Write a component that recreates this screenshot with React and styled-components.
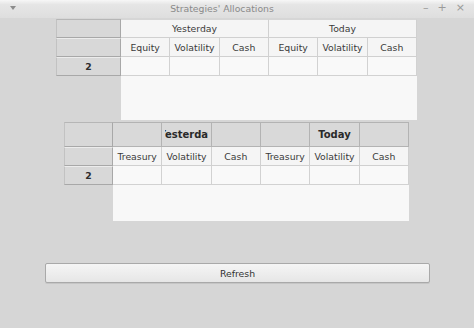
import React from "react";
import styled, { createGlobalStyle } from "styled-components";

const Global = createGlobalStyle`
  html, body { margin: 0; padding: 0; background: #d6d6d6; }
  body { font-family: "DejaVu Sans", "Liberation Sans", sans-serif; }
`;

const Window = styled.div`
  width: 474px;
  height: 328px;
  background: #d6d6d6;
  display: flex;
  flex-direction: column;
  overflow: hidden;
  font-family: "DejaVu Sans", "Liberation Sans", sans-serif;
  font-size: 9.3px;
  color: #333;
`;

const TitleBar = styled.div`
  height: 18px;
  flex: none;
  display: grid;
  grid-template-columns: 40px 1fr 60px;
  align-items: center;
  background: linear-gradient(#f7f7f7 0%, #e6e6e6 25%, #dedede 100%);
`;

const MenuArrow = styled.div`
  justify-self: start;
  margin-left: 10px;
  margin-top: -3px;
  width: 0;
  height: 0;
  border-left: 3px solid transparent;
  border-right: 3px solid transparent;
  border-top: 4px solid #8c8c8c;
`;

const Title = styled.div`
  text-align: center;
  color: #8a8a8a;
  font-size: 9.3px;
  margin-top: -1px;
  margin-left: -10px;
`;

const WinButtons = styled.div`
  display: flex;
  gap: 9px;
  justify-content: flex-end;
  padding-right: 9px;
  color: #9a9a9a;
  font-size: 11px;
  margin-top: -3px;
`;

const Content = styled.div`
  display: flex;
  flex-direction: column;
  flex: 1;
`;

const TableWidget = styled.div`
  display: flex;
  flex-direction: column;
  margin-left: ${(p) => p.$left}px;
  margin-top: ${(p) => p.$top}px;
  width: ${(p) => p.$width}px;
`;

const Grid = styled.div`
  display: grid;
  grid-template-columns: ${(p) => p.$corner}px repeat(6, 1fr);
  grid-template-rows: ${(p) => p.$rows};
`;

const HeadCell = styled.div`
  grid-column: span ${(p) => p.$span || 1};
  display: flex;
  align-items: center;
  padding: 0 3px;
  min-width: 0;
  background: ${(p) => (p.$gray ? "#d9d9d9" : "#f5f5f5")};
  border-right: 1px solid ${(p) => (p.$gray ? "#b3b3b3" : "#d0d0d0")};
  border-bottom: 1px solid ${(p) => (p.$gray ? "#b3b3b3" : "#d0d0d0")};
  border-top: ${(p) => (p.$first ? `1px solid ${p.$gray ? "#b3b3b3" : "#d6d6d6"}` : "none")};
  box-sizing: border-box;
  font-weight: ${(p) => (p.$bold ? "bold" : "normal")};
  font-size: ${(p) => (p.$bold ? "10px" : "9.3px")};
  color: ${(p) => (p.$bold ? "#2a2a2a" : "#3a3a3a")};
`;

const Label = styled.div`
  flex: 1;
  min-width: 0;
  display: flex;
  justify-content: center;
  overflow: hidden;
  white-space: nowrap;
  span { flex: none; }
`;

const SideCell = styled.div`
  display: flex;
  align-items: center;
  justify-content: center;
  background: #d8d8d8;
  border-left: 1px solid #c2c2c2;
  border-top: ${(p) => (p.$first ? "1px solid #b6b6b6" : "1px solid #ececec")};
  border-right: 1px solid #a8a8a8;
  border-bottom: 1px solid #a8a8a8;
  box-sizing: border-box;
  font-weight: bold;
  color: #2e2e2e;
`;

const DataCell = styled.div`
  background: #f9f9f9;
  border-right: 1px solid #d2d2d2;
  border-bottom: 1px solid #d2d2d2;
  box-sizing: border-box;
`;

const Filler = styled.div`
  display: grid;
  grid-template-columns: ${(p) => p.$corner}px 1fr;
  height: ${(p) => p.$height}px;
`;

const Gutter = styled.div`
  background: #d6d6d6;
`;

const Viewport = styled.div`
  background: #f8f8f8;
`;

const Spacer = styled.div`
  height: ${(p) => p.$h}px;
  flex: none;
`;

const RefreshButton = styled.button`
  margin-left: 45px;
  width: 385px;
  height: 20px;
  padding: 0;
  border: 1px solid #a9a9a9;
  border-radius: 2px;
  background: linear-gradient(#f5f5f5, #e6e6e6);
  box-shadow: 0 1px 0 rgba(0, 0, 0, 0.08);
  font-family: "DejaVu Sans", "Liberation Sans", sans-serif;
  font-size: 9.3px;
  color: #333;
  box-sizing: border-box;
`;

function AllocTable({ left, top, width, corner, rows, groupCells, columns, fillerHeight }) {
  return (
    <TableWidget $left={left} $top={top} $width={width}>
      <Grid $corner={corner} $rows={rows}>
        <SideCell $first />
        {groupCells.map((c, i) => (
          <HeadCell key={"g" + i} $first $span={c.span} $gray={c.gray} $bold={c.bold}>
            <Label>
              <span>{c.text}</span>
            </Label>
          </HeadCell>
        ))}
        <SideCell />
        {columns.map((c, i) => (
          <HeadCell key={"c" + i}>
            <Label>
              <span>{c}</span>
            </Label>
          </HeadCell>
        ))}
        <SideCell>2</SideCell>
        {columns.map((_, i) => (
          <DataCell key={"d" + i} />
        ))}
      </Grid>
      <Filler $corner={corner} $height={fillerHeight}>
        <Gutter />
        <Viewport />
      </Filler>
    </TableWidget>
  );
}

export default function App() {
  return (
    <>
      <Global />
      <Window>
        <TitleBar>
          <MenuArrow />
          <Title>Strategies' Allocations</Title>
          <WinButtons>
            <span>–</span>
            <span>+</span>
            <span>×</span>
          </WinButtons>
        </TitleBar>
        <Content>
          <AllocTable
            left={56}
            top={1}
            width={361}
            corner={65}
            rows="19px 19px 19px"
            fillerHeight={44}
            groupCells={[
              { text: "Yesterday", span: 3 },
              { text: "Today", span: 3 },
            ]}
            columns={["Equity", "Volatility", "Cash", "Equity", "Volatility", "Cash"]}
          />
          <AllocTable
            left={64}
            top={2}
            width={345}
            corner={49}
            rows="25px 19px 19px"
            fillerHeight={36}
            groupCells={[
              { text: "", gray: true },
              { text: "Yesterday", gray: true, bold: true },
              { text: "", gray: true },
              { text: "", gray: true },
              { text: "Today", gray: true, bold: true },
              { text: "", gray: true },
            ]}
            columns={["Treasury", "Volatility", "Cash", "Treasury", "Volatility", "Cash"]}
          />
          <Spacer $h={42} />
          <RefreshButton>Refresh</RefreshButton>
        </Content>
      </Window>
    </>
  );
}
